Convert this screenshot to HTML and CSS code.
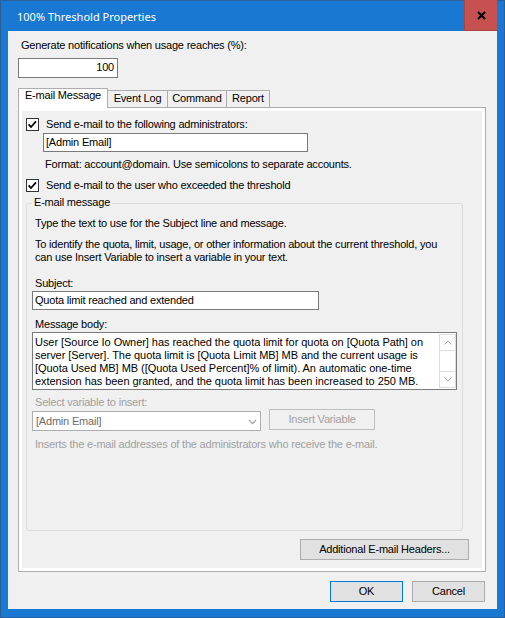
FILE: index.html
```html
<!DOCTYPE html>
<html>
<head>
<meta charset="utf-8">
<title>100% Threshold Properties</title>
<link rel="stylesheet" href="styles.css">
</head>
<body>
<div class="window">
  <div class="titlebar">
    <span class="title">100% Threshold Properties</span>
    <div class="close">
      <svg width="9" height="9" viewBox="0 0 9 9"><path d="M1 1L8 8M8 1L1 8" stroke="#000" stroke-width="2.1" fill="none"/></svg>
    </div>
  </div>
  <div class="client">
    <div class="label top-label">Generate notifications when usage reaches (%):</div>
    <div class="textbox pct">100</div>
    <div class="tabs">
      <div class="tab selected w-email">E-mail Message</div>
      <div class="tab w-event">Event Log</div>
      <div class="tab w-cmd">Command</div>
      <div class="tab w-report">Report</div>
    </div>
    <div class="panel">
      <div class="page">
        <div class="check-row">
          <svg class="checkbox" width="13" height="13" viewBox="0 0 13 13"><rect x="0.5" y="0.5" width="12" height="12" fill="#fff" stroke="#333"/><path d="M2.6 6.4L5 9L10 3.4" stroke="#000" stroke-width="1.8" fill="none"/></svg>
          <span class="check-label">Send e-mail to the following administrators:</span>
        </div>
        <div class="textbox admin">[Admin Email]</div>
        <div class="label hint">Format: account@domain. Use semicolons to separate accounts.</div>
        <div class="check-row row2">
          <svg class="checkbox" width="13" height="13" viewBox="0 0 13 13"><rect x="0.5" y="0.5" width="12" height="12" fill="#fff" stroke="#333"/><path d="M2.6 6.4L5 9L10 3.4" stroke="#000" stroke-width="1.8" fill="none"/></svg>
          <span class="check-label">Send e-mail to the user who exceeded the threshold</span>
        </div>
        <div class="group">
          <div class="legend">E-mail message</div>
          <div class="gtext intro">Type the text to use for the Subject line and message.</div>
          <div class="gtext para">To identify the quota, limit, usage, or other information about the current threshold, you<br>can use Insert Variable to insert a variable in your text.</div>
          <div class="gtext field-label subj-label">Subject:</div>
          <div class="textbox subject">Quota limit reached and extended</div>
          <div class="gtext field-label body-label">Message body:</div>
          <div class="memo">
            <div class="memo-text">User [Source Io Owner] has reached the quota limit for quota on [Quota Path] on<br>server [Server]. The quota limit is [Quota Limit MB] MB and the current usage is<br>[Quota Used MB] MB ([Quota Used Percent]% of limit). An automatic one-time<br>extension has been granted, and the quota limit has been increased to 250 MB.</div>
            <div class="vscroll">
              <div class="sb-btn"><svg width="8" height="5" viewBox="0 0 8 5"><path d="M0.5 4.5L4 1L7.5 4.5" stroke="#a6a6a6" stroke-width="1" fill="none"/></svg></div>
              <div class="sb-mid"></div>
              <div class="sb-btn"><svg width="8" height="5" viewBox="0 0 8 5"><path d="M0.5 0.5L4 4L7.5 0.5" stroke="#a6a6a6" stroke-width="1" fill="none"/></svg></div>
            </div>
          </div>
          <div class="gtext disabled sel-label">Select variable to insert:</div>
          <div class="var-row">
            <div class="combo"><span>[Admin Email]</span><svg width="9" height="6" viewBox="0 0 9 6"><path d="M1 1L4.5 4.5L8 1" stroke="#a6a6a6" stroke-width="1.3" fill="none"/></svg></div>
            <button class="btn btn-disabled insert-btn" type="button">Insert Variable</button>
          </div>
          <div class="gtext disabled inserts">Inserts the e-mail addresses of the administrators who receive the e-mail.</div>
        </div>
        <div class="headers-row">
          <button class="btn headers-btn" type="button">Additional E-mail Headers...</button>
        </div>
      </div>
    </div>
    <div class="dialog-buttons">
      <button class="btn default-btn" type="button">OK</button>
      <button class="btn" type="button">Cancel</button>
    </div>
  </div>
</div>
</body>
</html>
```
FILE: styles.css
```css
html, body {
  margin: 0;
  padding: 0;
}

body {
  font-family: "Liberation Sans", Arial, sans-serif;
  font-size: 11px;
  letter-spacing: -0.2px;
  color: #000;
  background: #1979d2;
}

.window {
  width: 505px;
  height: 618px;
  box-sizing: border-box;
  border: 1px solid #2a5f99;
  border-top: none;
  background: #1979d2;
  padding: 0 7px 8px 7px;
  display: flex;
  flex-direction: column;
  box-shadow: inset 0 1px 0 #2a5f99;
}

.titlebar {
  height: 31px;
  display: flex;
  align-items: center;
  justify-content: space-between;
  flex-shrink: 0;
}

.title {
  color: #fff;
  font-family: "Noto Sans", "Open Sans", sans-serif;
  font-size: 11px;
  letter-spacing: 0;
  margin-left: 9px;
  margin-top: 1px;
}

.close {
  width: 33px;
  height: 31px;
  box-sizing: border-box;
  background: #c75050;
  border-left: 1px solid #a84444;
  border-bottom: 1px solid #a84444;
  display: flex;
  align-items: center;
  justify-content: center;
  align-self: flex-start;
}

.client {
  background: #f0f0f0;
  height: 578px;
  box-sizing: border-box;
  padding: 8px 11px 0 10px;
}

.label {
  line-height: 13px;
  white-space: nowrap;
}

.top-label {
  margin-left: 3px;
}

.textbox {
  box-sizing: border-box;
  border: 1px solid #7a7a7a;
  background: #fff;
  line-height: 17px;
  padding: 0 2px;
  white-space: nowrap;
}

.pct {
  margin-top: 6px;
  width: 100px;
  height: 20px;
  text-align: right;
  padding-right: 3px;
}

/* Tabs */
.tabs {
  display: flex;
  align-items: flex-end;
  margin-top: 10px;
  height: 19px;
}

.tab {
  box-sizing: border-box;
  height: 17px;
  border: 1px solid #adadad;
  border-bottom: none;
  background: #f0f0f0;
  text-align: center;
  line-height: 15px;
  margin-left: -1px;
  white-space: nowrap;
}

.tab.selected {
  height: 20px;
  margin-left: 0;
  margin-bottom: -1px;
  background: #fff;
  line-height: 13px;
  position: relative;
  z-index: 1;
}

.w-email { width: 90px; }
.w-event { width: 61px; }
.w-cmd { width: 60px; }
.w-report { width: 44px; }

.panel {
  box-sizing: border-box;
  width: 468px;
  height: 465px;
  border: 1px solid #adadad;
  background: #fff;
  padding: 3px;
}

.page {
  box-sizing: border-box;
  height: 100%;
  background: #f0f0f0;
  padding: 7px 0 0 4px;
}

.check-row {
  display: flex;
  align-items: center;
  height: 13px;
  line-height: 13px;
  white-space: nowrap;
}

.checkbox {
  display: block;
  flex-shrink: 0;
}

.check-label {
  margin-left: 7px;
}

.row2 {
  margin-top: 8px;
}

.admin {
  margin-top: 2px;
  margin-left: 17px;
  width: 265px;
  height: 19px;
}

.hint {
  margin-top: 6px;
  margin-left: 19px;
}

/* Group box */
.group {
  box-sizing: border-box;
  margin-top: 11px;
  width: 437px;
  height: 328px;
  border: 1px solid #dcdcdc;
  border-radius: 3px;
  padding: 0 0 0 5px;
}

.legend {
  margin-top: -8px;
  width: fit-content;
  padding: 0 2px;
  background: #f0f0f0;
  line-height: 13px;
  white-space: nowrap;
}

.gtext {
  line-height: 13px;
  margin-left: 3px;
  white-space: nowrap;
}

.intro { margin-top: 8px; }
.para { margin-top: 8px; }
.subj-label { margin-top: 13px; }
.body-label { margin-top: 8px; }

.subject {
  margin-top: 1px;
  width: 287px;
  height: 19px;
}

.memo {
  margin-top: 1px;
  box-sizing: border-box;
  width: 425px;
  height: 58px;
  border: 1px solid #7a7a7a;
  background: #fff;
  display: flex;
}

.memo-text {
  flex: 1;
  padding: 3px 0 0 2px;
  font-size: 11px;
  letter-spacing: -0.05px;
  line-height: 13px;
  white-space: nowrap;
  overflow: hidden;
}

.vscroll {
  width: 17px;
  box-sizing: border-box;
  padding: 1px 0 1px 0;
  display: flex;
  flex-direction: column;
  background: #fff;
}

.sb-btn {
  box-sizing: border-box;
  height: 17px;
  border: 1px solid #dcdcdc;
  display: flex;
  align-items: center;
  justify-content: center;
  background: #fff;
}

.sb-mid {
  flex: 1;
  box-sizing: border-box;
  border-left: 1px solid #dcdcdc;
  border-right: 1px solid #dcdcdc;
}

.disabled {
  color: #a0a0a0;
}

.sel-label {
  margin-top: 6px;
}

.var-row {
  display: flex;
  align-items: flex-start;
}

.combo {
  box-sizing: border-box;
  margin-top: 2px;
  width: 229px;
  height: 20px;
  border: 1px solid #adadad;
  background: #fff;
  color: #6d6d6d;
  display: flex;
  align-items: center;
  justify-content: space-between;
  padding: 0 3px 0 3px;
  line-height: 18px;
  white-space: nowrap;
}

.combo svg {
  display: block;
  margin-top: 1px;
}

.btn {
  box-sizing: border-box;
  border: 1px solid #adadad;
  background: #e1e1e1;
  font-family: inherit;
  font-size: inherit;
  letter-spacing: inherit;
  color: #000;
  line-height: 19px;
  height: 21px;
  width: 73px;
  padding: 0;
  margin: 0;
  text-align: center;
  white-space: nowrap;
}

.btn-disabled {
  background: #f0f0f0;
  border-color: #bfbfbf;
  color: #a0a0a0;
}

.insert-btn {
  width: 106px;
  margin-left: 8px;
}

.inserts {
  margin-top: 7px;
}

.headers-row {
  display: flex;
  justify-content: flex-end;
  padding-right: 13px;
  margin-top: 8px;
}

.headers-btn {
  width: 169px;
}

.dialog-buttons {
  display: flex;
  justify-content: flex-end;
  gap: 9px;
  margin-top: 9px;
  padding-right: 1px;
}

.default-btn {
  border-color: #0078d7;
}
```
